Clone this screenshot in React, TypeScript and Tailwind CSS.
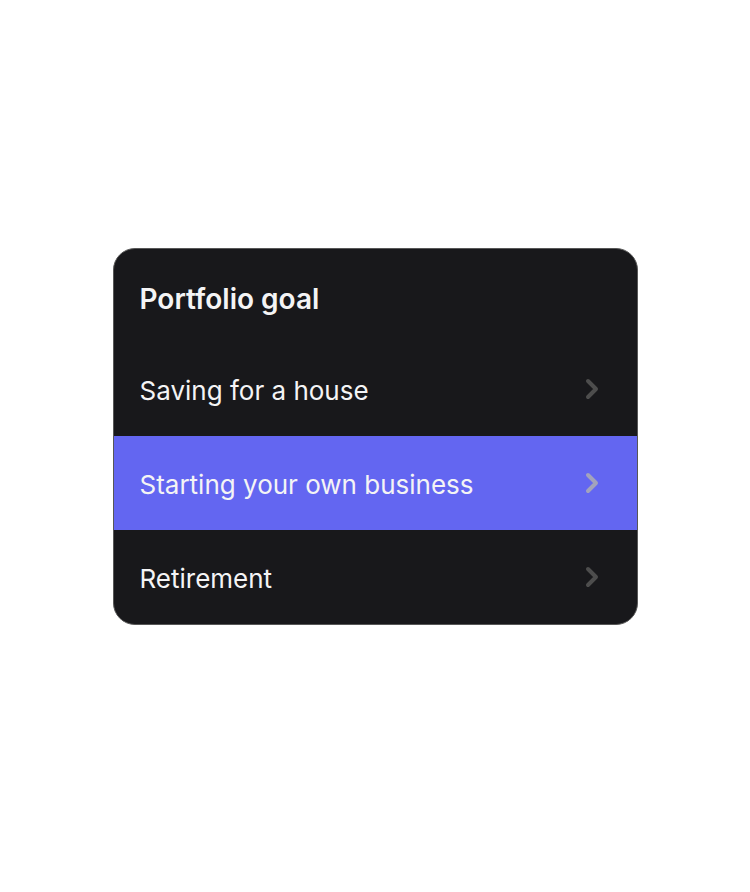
import { ChevronRight } from "lucide-react";

const goals = [
  { label: "Saving for a house", active: false },
  { label: "Starting your own business", active: true },
  { label: "Retirement", active: false },
];

export default function App() {
  return (
    <main
      className="min-h-screen bg-white flex justify-center pt-[248px]"
      style={{ fontFamily: "Inter, 'Noto Sans', sans-serif" }}
    >
      <div className="w-[525px] h-fit rounded-[22px] border border-[#575757] bg-[#18181b] overflow-hidden">
        <div className="h-[93px] flex items-center pl-[26px] pt-[6px]">
          <h2 className="text-[28px] leading-9 font-semibold text-zinc-100">Portfolio goal</h2>
        </div>
        {goals.map((g) => (
          <div
            key={g.label}
            className={`h-[94px] flex items-center justify-between pl-[26px] pr-[29px] ${
              g.active ? "bg-[#6366f1]" : ""
            }`}
          >
            <span className="text-[26px] leading-8 text-zinc-100 pt-[3px]">{g.label}</span>
            <ChevronRight
              size={32}
              strokeWidth={3}
              className={g.active ? "text-[#a3a3bc]" : "text-[#4d4d4d]"}
            />
          </div>
        ))}
      </div>
    </main>
  );
}
